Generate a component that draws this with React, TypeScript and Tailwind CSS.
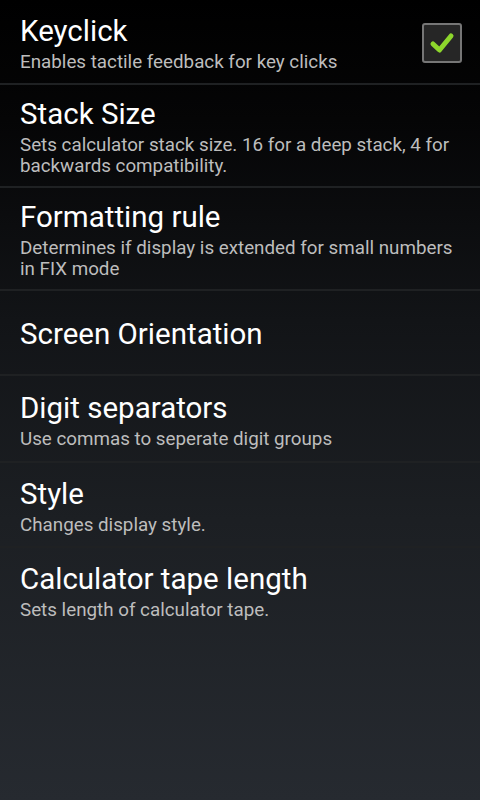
const items = [
  { title: "Keyclick", summary: "Enables tactile feedback for key clicks", checkbox: true },
  {
    title: "Stack Size",
    summary: "Sets calculator stack size. 16 for a deep stack, 4 for backwards compatibility.",
  },
  {
    title: "Formatting rule",
    summary: "Determines if display is extended for small numbers in FIX mode",
  },
  { title: "Screen Orientation" },
  { title: "Digit separators", summary: "Use commas to seperate digit groups", tall: true },
  { title: "Style", summary: "Changes display style." },
  { title: "Calculator tape length", summary: "Sets length of calculator tape.", last: true },
];

function CheckBox() {
  return (
    <div className="flex h-[40px] w-[40px] shrink-0 items-center justify-center rounded-[3px] border-2 border-[#767676] bg-[#262626]">
      <svg width="30" height="30" viewBox="0 0 30 30">
        <path
          d="M6 16 L12.5 22 L24 8"
          fill="none"
          stroke="#8dd62c"
          strokeWidth="5"
          strokeLinecap="round"
          strokeLinejoin="round"
        />
      </svg>
    </div>
  );
}

export default function App() {
  return (
    <div
      className="min-h-[800px] w-full bg-[linear-gradient(to_bottom,#000000_0%,#050506_15%,#121417_40%,#1c1f23_65%,#262a30_100%)] text-white"
      style={{ fontFamily: "Roboto, 'Noto Sans', sans-serif" }}
    >
      {items.map((item) => (
        <div
          key={item.title}
          className={
            (item.tall ? "min-h-[87px] " : "min-h-[85px] ") +
            (item.last
              ? "flex items-center px-5 pt-[12px] pb-[10px]"
              : "flex items-center border-b-2 border-[#1f2123] px-5 pt-[12px] pb-[9px]")
          }
        >
          <div className="min-w-0 flex-1">
            <div className="text-[29.5px] leading-[34px] text-white">{item.title}</div>
            {item.summary && (
              <div className="mt-[4px] text-[18.8px] leading-[21px] text-[#bdbdbd]">
                {item.summary}
              </div>
            )}
          </div>
          {item.checkbox && (
            <div className="ml-4 mr-[-2px]">
              <CheckBox />
            </div>
          )}
        </div>
      ))}
    </div>
  );
}
